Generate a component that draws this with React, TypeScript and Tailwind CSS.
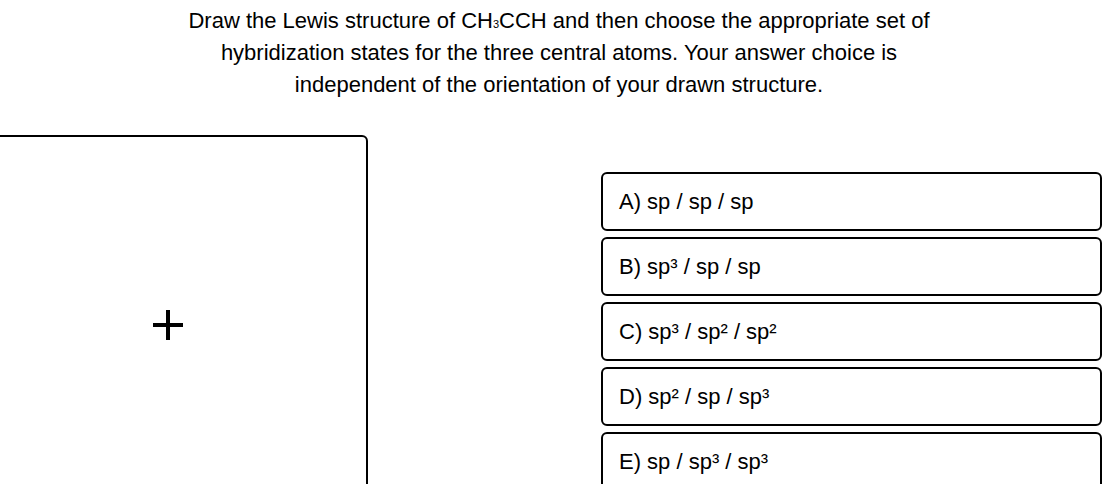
import React from 'react';

const choices = [
  'A) sp / sp / sp',
  'B) sp³ / sp / sp',
  'C) sp³ / sp² / sp²',
  'D) sp² / sp / sp³',
  'E) sp / sp³ / sp³',
];

export default function App() {
  return (
    <div
      className="w-[1118px] h-[484px] overflow-hidden bg-white text-black"
      style={{ fontFamily: '"Liberation Sans", Arial, sans-serif' }}
    >
      {/* Question */}
      <div className="pt-[5px] w-[1118px] text-center text-[22px] leading-[32px]">
        <p>
          Draw the Lewis structure of CH<span className="text-[11px] leading-none">3</span>CCH and then choose the appropriate set of
        </p>
        <p>hybridization states for the three central atoms. Your answer choice is</p>
        <p>independent of the orientation of your drawn structure.</p>
      </div>

      <div className="flex mt-[34px]">
        {/* Drawing area */}
        <div className="ml-[-28px] w-[396px] h-[380px] shrink-0 border-2 border-black rounded-[6px] flex items-center justify-center">
          <svg width="32" height="32" viewBox="0 0 32 32" className="ml-[-4px]">
            <rect x="14" y="1" width="4" height="30" fill="#000" />
            <rect x="1" y="14" width="30" height="4" fill="#000" />
          </svg>
        </div>

        {/* Choices */}
        <div className="ml-[233px] mt-[37px] w-[501px] flex flex-col gap-[6px]">
          {choices.map((c) => (
            <div
              key={c}
              className="h-[59px] border-2 border-black rounded-[6px] flex items-center pl-[16px] text-[22px]"
            >
              {c}
            </div>
          ))}
        </div>
      </div>
    </div>
  );
}
